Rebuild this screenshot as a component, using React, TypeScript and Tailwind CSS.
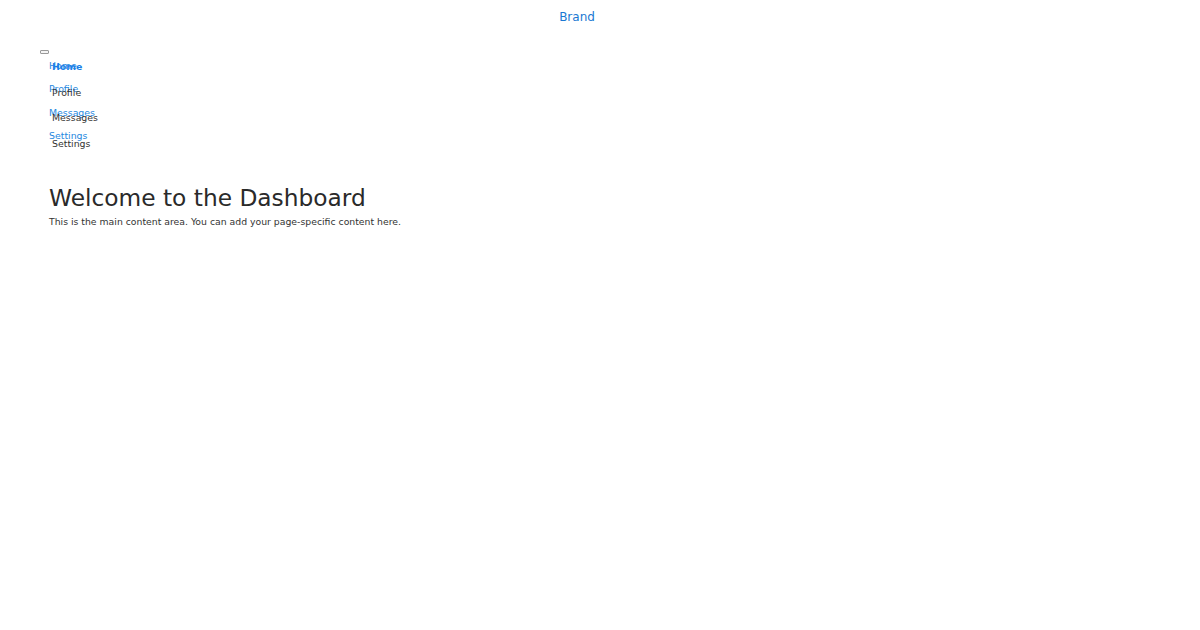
import React from "react";

export default function App() {
  const items = ["Home", "Profile", "Messages", "Settings"];
  return (
    <div className="w-[1200px] h-[630px] bg-white text-[#333] [font-family:'DejaVu_Sans',sans-serif]">
      <header className="flex justify-center pt-[9px] h-[50px] pr-[46px]">
        <a className="text-[12px] leading-[17px] text-[#1a78d2]">Brand</a>
      </header>
      <div className="pl-[40px]">
        <button className="block w-[9px] h-[4px] border border-[#999] rounded-[1px] bg-[#f4f4f4] p-0"></button>
      </div>
      <div className="relative ml-[49px] h-[103px]">
        <ul className="flex flex-col">
          {items.map((t) => (
            <li key={t} className="text-[9.4px] leading-[23.3px] text-[#2688e0]">
              {t}
            </li>
          ))}
        </ul>
        <ul className="absolute left-[3px] top-[0px] flex flex-col">
          {items.map((t, i) => (
            <li
              key={t}
              className={
                i === 0
                  ? "text-[9.4px] leading-[25.7px] font-semibold text-[#1a7fe8]"
                  : "text-[9.4px] leading-[25.7px] text-[#333]"
              }
            >
              {t}
            </li>
          ))}
        </ul>
      </div>
      <main className="pl-[49px] pt-[26px]">
        <h1 className="text-[23.3px] leading-[30px] text-[#2a2a2a]">Welcome to the Dashboard</h1>
        <p className="mt-[1px] text-[9.3px] leading-[15px] text-[#333]">
          This is the main content area. You can add your page-specific content here.
        </p>
      </main>
    </div>
  );
}
